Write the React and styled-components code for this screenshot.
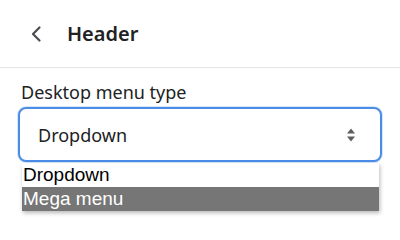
import React, { useState } from "react";
import styled, { createGlobalStyle } from "styled-components";

const GlobalStyle = createGlobalStyle`
  html, body {
    margin: 0;
    padding: 0;
    background: #ffffff;
  }
  body {
    font-family: "Noto Sans", "Open Sans", sans-serif;
    color: #202223;
    overflow: hidden;
  }
`;

const options = ["Dropdown", "Mega menu"];

export default function App() {
  const [value] = useState("Dropdown");
  const [hovered] = useState(1);

  return (
    <>
      <GlobalStyle />
      <Panel>
        <TopBar>
          <BackButton aria-label="Back">
            <svg width="14" height="18" viewBox="0 0 14 18" fill="none">
              <path
                d="M10.5 2.5 L4 9 L10.5 15.5"
                stroke="#4a4d50"
                strokeWidth="2.2"
                strokeLinecap="round"
                strokeLinejoin="round"
              />
            </svg>
          </BackButton>
          <Title>Header</Title>
        </TopBar>

        <Body>
          <Field>
            <Label>Desktop menu type</Label>
            <SelectWrap>
              <SelectBox>
                <span>{value}</span>
                <svg width="10" height="16" viewBox="0 0 10 16">
                  <path d="M5 1.5 L9 6.5 H1 Z" fill="#5c5f62" />
                  <path d="M5 14.5 L1 9.5 H9 Z" fill="#5c5f62" />
                </svg>
              </SelectBox>
              <OptionList>
                {options.map((opt, i) => (
                  <Option key={opt} $active={i === hovered}>
                    {opt}
                  </Option>
                ))}
              </OptionList>
            </SelectWrap>
          </Field>

          {/* next field sits mostly under the open list */}
          <Field $gap={30}>
            <Label>Mobile</Label>
          </Field>
        </Body>
      </Panel>
    </>
  );
}

const Panel = styled.div`
  width: 400px;
  height: 236px;
  background: #fff;
`;

const TopBar = styled.div`
  height: 67px;
  display: flex;
  align-items: center;
  padding: 0 0 0 26px;
  border-bottom: 1px solid #e4e5e7;
  box-sizing: content-box;
`;

const BackButton = styled.button`
  border: none;
  background: transparent;
  padding: 0;
  width: 20px;
  height: 20px;
  display: flex;
  align-items: center;
  justify-content: center;
  margin-right: 21px;
`;

const Title = styled.h1`
  margin: 0;
  font-size: 20px;
  font-weight: 600;
  color: #202223;
`;

const Body = styled.div`
  padding: 12px 18px 0 18px;
`;

const Field = styled.div`
  margin-top: ${(p) => (p.$gap ? `${p.$gap}px` : "0")};
`;

const Label = styled.div`
  font-size: 18px;
  line-height: 24px;
  padding-left: 3px;
  margin-bottom: 3px;
  color: #202223;
`;

const SelectBox = styled.div`
  height: 51px;
  border: 2px solid #4b8de6;
  border-radius: 8px;
  box-shadow: 0 0 0 1px #d6e6fb;
  display: flex;
  align-items: center;
  justify-content: space-between;
  padding: 0 24px 0 18px;
  font-size: 18px;
  color: #202223;
  background: #fff;
`;

const SelectWrap = styled.div`
  position: relative;
`;

const OptionList = styled.ul`
  position: absolute;
  left: 4px;
  right: 3px;
  top: 56px;
  margin: 0;
  padding: 0;
  list-style: none;
  background: #fff;
  box-shadow: 1px 2px 4px rgba(0, 0, 0, 0.28);
  z-index: 2;
`;

const Option = styled.li`
  height: 24px;
  line-height: 24px;
  padding-left: 1px;
  font-family: "Liberation Sans", Arial, sans-serif;
  font-size: 19px;
  color: ${(p) => (p.$active ? "#ffffff" : "#000000")};
  background: ${(p) => (p.$active ? "#767676" : "#ffffff")};
`;
